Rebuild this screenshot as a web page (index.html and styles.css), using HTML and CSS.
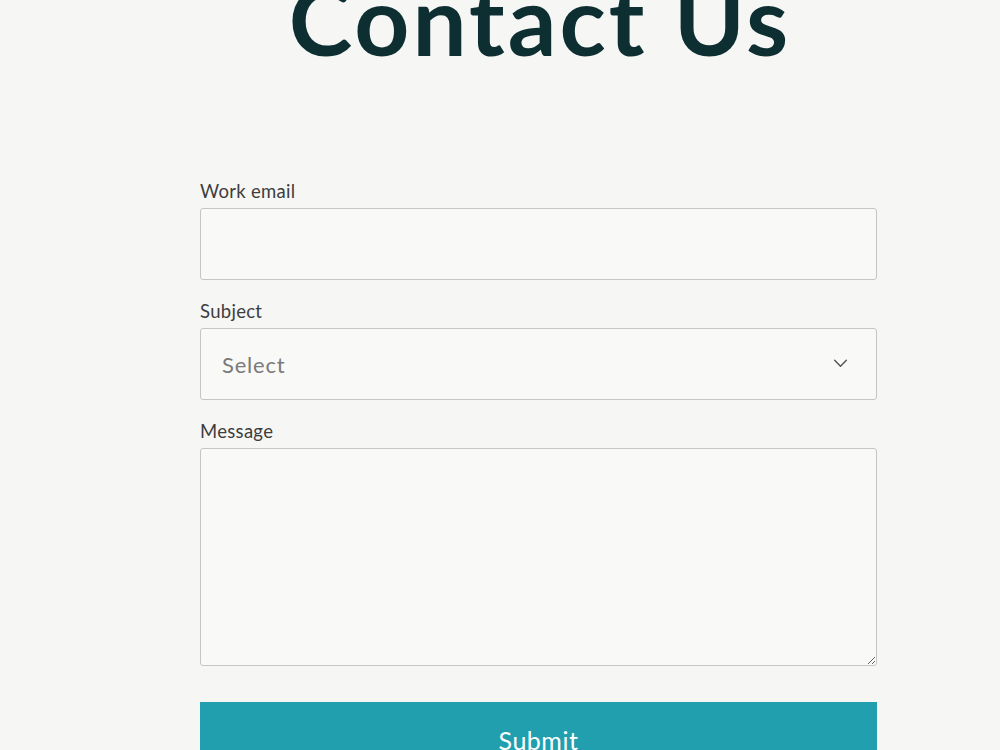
FILE: index.html
```html
<!DOCTYPE html>
<html lang="en">
<head>
    <meta charset="UTF-8">
    <meta name="viewport" content="width=device-width, initial-scale=1.0">
    <title>Contact Us</title>
    <link rel="stylesheet" href="styles.css">
</head>
<body>
    <div class="page">
        <h1>Contact Us</h1>
        <form class="contact-form" id="contactForm">
            <div class="form-group">
                <label for="email">Work email</label>
                <input type="email" id="email">
            </div>
            <div class="form-group">
                <label for="subject">Subject</label>
                <div class="select-wrap">
                    <select id="subject">
                        <option value="">Select</option>
                        <option>Sales</option>
                        <option>Support</option>
                        <option>Partnerships</option>
                    </select>
                    <svg class="chevron" viewBox="0 0 16 10" width="15" height="9">
                        <path d="M1.5 1.5 L8 8 L14.5 1.5" fill="none" stroke="#555" stroke-width="1.6" stroke-linecap="round" stroke-linejoin="round"/>
                    </svg>
                </div>
            </div>
            <div class="form-group">
                <label for="message">Message</label>
                <textarea id="message"></textarea>
            </div>
            <button type="submit">Submit</button>
        </form>
    </div>
</body>
</html>
```

FILE: styles.css
```css
body {
    margin: 0;
    background-color: #f6f6f5;
    font-family: Lato, "Noto Sans", Arial, sans-serif;
    overflow: hidden;
}

.page {
    width: 677px;
    margin: 0 auto;
    padding-left: 77px;
}

/* heading sits partly above the fold */
h1 {
    margin: -31px 0 0;
    text-align: center;
    font-size: 96px;
    line-height: 100px;
    font-weight: 700;
    color: #0e2f31;
    letter-spacing: 3px;
    text-indent: 3px;
}

.contact-form {
    margin-top: 111px;
}

.form-group {
    margin-bottom: 20px;
}

.form-group label {
    display: block;
    font-size: 18.5px;
    line-height: 22px;
    letter-spacing: 0.3px;
    color: #3d3d3d;
    margin-bottom: 6px;
}

.form-group input,
.form-group select,
.form-group textarea {
    display: block;
    width: 100%;
    box-sizing: border-box;
    background: #f9f9f8;
    border: 1px solid #c6c6c6;
    border-radius: 3px;
    font-family: inherit;
    font-size: 22px;
    color: #333;
}

.form-group input {
    height: 72px;
    padding: 0 22px;
}

.select-wrap {
    position: relative;
}

.form-group select {
    height: 72px;
    padding: 0 21px;
    appearance: none;
    color: #7a7a7a;
    letter-spacing: 0.8px;
}

.chevron {
    position: absolute;
    right: 29px;
    top: 31px;
    pointer-events: none;
}

.form-group textarea {
    height: 218px;
    padding: 14px 22px;
    resize: vertical;
}

button {
    display: block;
    width: 100%;
    height: 64px;
    margin-top: 36px;
    padding-top: 12px;
    background-color: #229fae;
    color: #fff;
    border: none;
    border-radius: 0;
    font-family: inherit;
    font-size: 25px;
    letter-spacing: 0.5px;
    cursor: pointer;
}
```
